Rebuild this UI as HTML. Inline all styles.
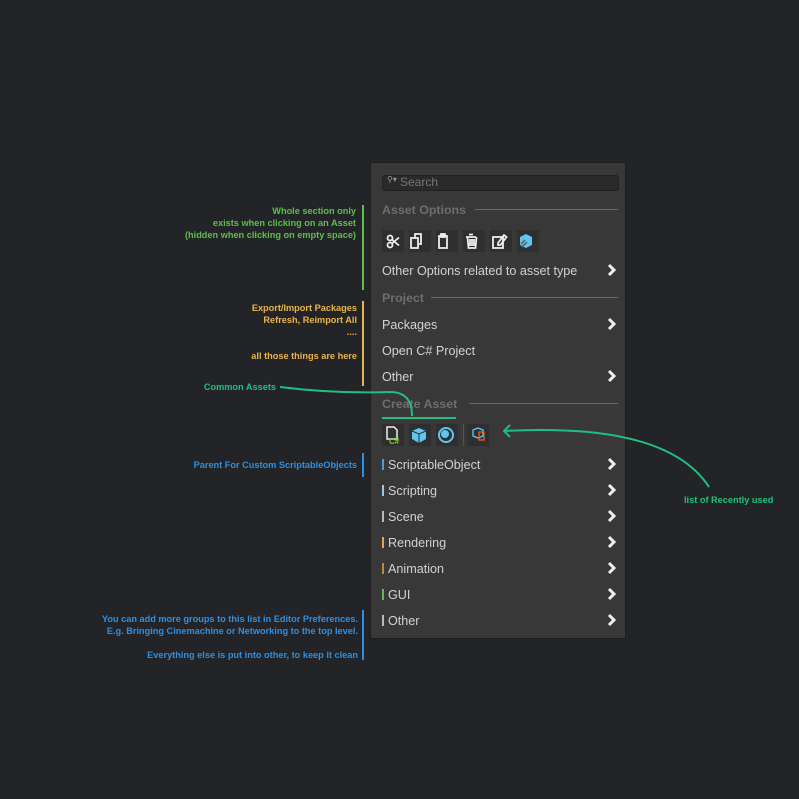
<!DOCTYPE html>
<html><head><meta charset="utf-8"><style>
body{margin:0;width:799px;height:799px;background:#232427;position:relative;overflow:hidden;font-family:"Liberation Sans",sans-serif}
.p{position:absolute;left:370px;top:162px;width:254px;height:475px;background:#383838;border:1px solid #1e1e1e}
.a{position:absolute;font-size:12.6px;color:#d2d2d2;white-space:nowrap}
.h{position:absolute;font-size:12.4px;font-weight:bold;color:#6e6e6e;white-space:nowrap}
.ln{position:absolute;height:1px;background:#6a6a6a}
.n{position:absolute;font-size:9.2px;font-weight:bold;text-align:right;white-space:nowrap;line-height:12px}
.vb{position:absolute;width:2px}
.ib{position:absolute;width:22px;height:22px;background:#2f2f2f;top:230px}
.bar{display:inline-block;width:2px;height:11px;margin-right:4px;vertical-align:-1px}
</style></head><body>
<div class="p"></div>
<div style="position:absolute;left:382px;top:175px;width:235px;height:14px;background:#2a2a2a;border:1px solid #202020;border-radius:3px"></div>
<div class="a" style="left:387px;top:175px;font-size:8px;color:#999">⚲▾</div>
<div class="a" style="left:400px;top:175px;color:#777;font-size:12px">Search</div>
<div class="h" style="left:382px;top:203px">Asset Options</div><div class="ln" style="left:475px;top:209px;width:143px"></div>
<div class="ib" style="left:382px"></div><div class="ib" style="left:409px"></div><div class="ib" style="left:436px"></div><div class="ib" style="left:463px"></div><div class="ib" style="left:490px"></div><div class="ib" style="left:517px"></div>
<svg style="position:absolute;left:382px;top:230px" width="160" height="22" fill="none" stroke="#eee" stroke-width="1.8">
<circle cx="8" cy="8" r="2.5"/><circle cx="8" cy="15" r="2.5"/><path d="M10 9.5l7 6M10 13.5l7-6"/>
<rect x="29" y="8" width="7" height="10"/><path d="M33 8V4h6v10h-3"/>
<rect x="57" y="6" width="8" height="12"/><rect x="59" y="4" width="4" height="3" fill="#eee"/>
<path d="M84 7h10M85.5 7l1 11h7l1-11M88 9v7M90 9v7M92 9v7M87 4.5h4"/>
<rect x="111" y="7" width="10" height="11"/><path d="M116 13l6-8 2.5 2-6 8h-2.5z"/>
<path d="M138 7l6-3 6 3v8l-6 3-6-3z" fill="#5fc6ef" stroke="none"/><path d="M139 14l4-4M140 17l5-5" stroke="#666"/>
</svg>
<div class="a" style="left:382px;top:264px">Other Options related to asset type</div>
<div class="h" style="left:382px;top:291px">Project</div><div class="ln" style="left:431px;top:297px;width:187px"></div>
<div class="a" style="left:382px;top:318px">Packages</div>
<div class="a" style="left:382px;top:344px">Open C# Project</div>
<div class="a" style="left:382px;top:370px">Other</div>
<div class="h" style="left:382px;top:397px">Create Asset</div><div class="ln" style="left:469px;top:403px;width:149px"></div>
<div class="ib" style="left:382px;top:424px"></div><div class="ib" style="left:409px;top:424px"></div><div class="ib" style="left:436px;top:424px"></div><div class="ib" style="left:467px;top:424px"></div>
<div style="position:absolute;left:463px;top:424px;width:1px;height:22px;background:#555"></div>
<svg style="position:absolute;left:382px;top:424px" width="110" height="22">
<path d="M5 3h7l3 3v9H5z" fill="none" stroke="#eee" stroke-width="1.5"/><text x="7" y="20" font-size="8" font-weight="bold" fill="#7ac943" font-family="Liberation Sans">C#</text>
<path d="M30 7l7-3 7 3v8l-7 4-7-4z" fill="#5fc6ef"/><path d="M30 7l7 3 7-3M37 10v9" stroke="#2f2f2f" fill="none"/>
<circle cx="64" cy="11" r="7" fill="none" stroke="#5fc6ef" stroke-width="2"/><circle cx="63" cy="10" r="4" fill="#5fc6ef"/>
<path d="M91 6l5-2 5 2v6l-5 2-5-2z" fill="none" stroke="#5fc6ef" stroke-width="1.3"/><rect x="97" y="8" width="5" height="8" fill="none" stroke="#f05a28" stroke-width="1.3"/>
</svg>
<div class="a" style="left:382px;top:458px"><span class="bar" style="background:#4a9be0"></span>ScriptableObject</div>
<div class="a" style="left:382px;top:484px"><span class="bar" style="background:#9fc8e8"></span>Scripting</div>
<div class="a" style="left:382px;top:510px"><span class="bar" style="background:#bbb"></span>Scene</div>
<div class="a" style="left:382px;top:536px"><span class="bar" style="background:#e0a84a"></span>Rendering</div>
<div class="a" style="left:382px;top:562px"><span class="bar" style="background:#c08a2e"></span>Animation</div>
<div class="a" style="left:382px;top:588px"><span class="bar" style="background:#5cb85c"></span>GUI</div>
<div class="a" style="left:382px;top:614px"><span class="bar" style="background:#bbb"></span>Other</div>
<svg style="position:absolute;left:0;top:0" width="799" height="799" fill="none">
<g stroke="#eee" stroke-width="3">
<path d="M609 265l5 5-5 5M609 319l5 5-5 5M609 371l5 5-5 5M609 459l5 5-5 5M609 485l5 5-5 5M609 511l5 5-5 5M609 537l5 5-5 5M609 563l5 5-5 5M609 589l5 5-5 5M609 615l5 5-5 5"/></g>
<g stroke="#1fc07f" stroke-width="2">
<path d="M280 387c40 5 80 6 110 5c15 0 22 8 22 24"/><path d="M382 418h74"/>
<path d="M504 431c80-4 170 2 205 56"/><path d="M510 425l-6 6 6 6"/></g>
</svg>
<div class="n" style="right:443px;top:205px;color:#5cbf4a">Whole section only<br>exists when clicking on an Asset<br>(hidden when clicking on empty space)</div>
<div class="vb" style="left:362px;top:205px;height:85px;background:#5cbf4a"></div>
<div class="n" style="right:442px;top:302px;color:#e9b54a">Export/Import Packages<br>Refresh, Reimport All<br>....<br><br>all those things are here</div>
<div class="vb" style="left:362px;top:301px;height:85px;background:#e9b54a"></div>
<div class="n" style="right:523px;top:381px;color:#1fc07f">Common Assets</div>
<div class="n" style="left:684px;top:494px;color:#1fc07f;text-align:left">list of Recently used</div>
<div class="n" style="right:442px;top:459px;color:#2e8fe0">Parent For Custom ScriptableObjects</div>
<div class="vb" style="left:362px;top:453px;height:24px;background:#2e8fe0"></div>
<div class="n" style="right:441px;top:613px;color:#2e8fe0">You can add more groups to this list in Editor Preferences.<br>E.g. Bringing Cinemachine or Networking to the top level.<br><br>Everything else is put into other, to keep it clean</div>
<div class="vb" style="left:362px;top:610px;height:50px;background:#2e8fe0"></div>
</body></html>
